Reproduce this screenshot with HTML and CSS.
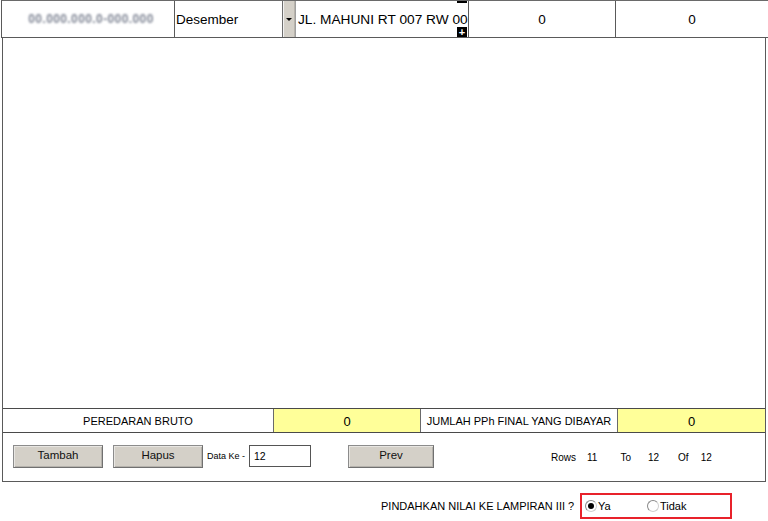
FILE: index.html
```html
<!DOCTYPE html>
<html>
<head>
<meta charset="utf-8">
<link rel="stylesheet" href="styles.css">
</head>
<body>
<div class="top-row">
  <div class="cell npwp"><span class="blur">00.000.000.0-000.000</span></div>
  <div class="cell bulan"><span>Desember</span></div>
  <div class="dd-btn"><span class="tri"></span></div>
  <div class="cell alamat"><span class="addr">JL. MAHUNI RT 007 RW 00</span><span class="plus">+</span><span class="plus-top"></span></div>
  <div class="cell num">0</div>
  <div class="cell num last">0</div>
</div>
<div class="panel">
  <div class="blank"></div>
  <div class="sum-row">
    <div class="sum-label l1">PEREDARAN BRUTO</div>
    <div class="sum-val v1">0</div>
    <div class="sum-label l2">JUMLAH PPh FINAL YANG DIBAYAR</div>
    <div class="sum-val v2">0</div>
  </div>
  <div class="btn-row">
    <button class="btn b-tambah">Tambah</button>
    <button class="btn b-hapus">Hapus</button>
    <span class="data-ke">Data Ke -</span>
    <div class="inp">12</div>
    <button class="btn b-prev">Prev</button>
    <div class="rows">
      <span class="r-rows">Rows</span><span class="r-n1">11</span>
      <span class="r-to">To</span><span class="r-n2">12</span>
      <span class="r-of">Of</span><span class="r-n3">12</span>
    </div>
  </div>
</div>
<div class="footer">
  <span class="question">PINDAHKAN NILAI KE LAMPIRAN III ?</span>
  <div class="radio-box">
    <span class="radio checked"></span><span class="r-label ya">Ya</span>
    <span class="radio"></span><span class="r-label">Tidak</span>
  </div>
</div>
</body>
</html>
```
FILE: styles.css
```css
* { box-sizing: border-box; }
html, body { margin: 0; padding: 0; background: #ffffff; }
body {
  width: 768px;
  height: 521px;
  overflow: hidden;
  font-family: "Liberation Sans", Arial, sans-serif;
  color: #000;
}

/* Top data row */
.top-row {
  display: flex;
  height: 38px;
  margin-left: 1px;
  border-top: 1px solid #6a6a6a;
  border-bottom: 1px solid #5a5a5a;
  border-left: 1px solid #5a5a5a;
}
.cell {
  display: flex;
  align-items: center;
  font-size: 13.5px;
  overflow: hidden;
  white-space: nowrap;
}
.npwp {
  width: 173px;
  justify-content: center;
  border-right: 1px solid #5a5a5a;
}
.blur {
  font-size: 12px;
  font-weight: bold;
  color: #7f8594;
  filter: blur(1.2px);
  letter-spacing: 0.4px;
  padding-left: 6px;
}
.bulan {
  width: 107px;
  padding-left: 1px;
}
.dd-btn {
  width: 14px;
  background: #d4d0c8;
  border-left: 1px solid #6d6d6d;
  border-right: 1px solid #a0a0a0;
  box-shadow: inset 1px 0 0 #f2f2f2, inset -1px 0 0 #b8b4ac;
  display: flex;
  align-items: center;
  justify-content: center;
}
.tri {
  width: 0;
  height: 0;
  border-left: 3px solid transparent;
  border-right: 3px solid transparent;
  border-top: 3px solid #000;
}
.alamat {
  position: relative;
  width: 173px;
  padding-left: 2px;
  border-right: 1px solid #5a5a5a;
  font-size: 13.7px;
}
.addr { display: block; }
.plus {
  position: absolute;
  right: 1px;
  bottom: 0;
  width: 10px;
  height: 10px;
  background: #000;
  color: #fff;
  font-size: 11px;
  line-height: 10px;
  text-align: center;
  font-weight: bold;
}
.plus-top {
  position: absolute;
  right: 1px;
  top: 0;
  width: 10px;
  height: 2px;
  background: #000;
}
.num {
  width: 147px;
  justify-content: center;
  border-right: 1px solid #5a5a5a;
  font-size: 13.5px;
}
.num.last {
  flex: 1;
  border-right: none;
}

/* Panel */
.panel {
  margin-left: 2px;
  width: 764px;
  height: 444px;
  border-left: 1px solid #5a5a5a;
  border-right: 1px solid #5a5a5a;
  border-bottom: 1px solid #5a5a5a;
  display: flex;
  flex-direction: column;
}
.blank { height: 370px; }
.sum-row {
  display: flex;
  height: 25px;
  border-top: 1px solid #4a4a4a;
  border-bottom: 1px solid #4a4a4a;
  font-size: 11px;
}
.sum-label {
  display: flex;
  align-items: center;
  justify-content: center;
}
.l1 { width: 270px; }
.l2 { width: 196px; }
.sum-val {
  display: flex;
  align-items: center;
  justify-content: center;
  background: #ffff99;
  font-size: 13px;
  padding-top: 2px;
}
.v1 {
  width: 148px;
  border-left: 1px solid #6a6a6a;
  border-right: 1px solid #6a6a6a;
}
.v2 {
  flex: 1;
  border-left: 1px solid #6a6a6a;
}

.btn-row {
  display: flex;
  align-items: flex-start;
  height: 48px;
  padding-top: 12px;
  padding-left: 10px;
}
.btn {
  height: 23px;
  background: #d4d0c8;
  border: 1px solid #8c8c8c;
  border-right-color: #707070;
  border-bottom-color: #707070;
  box-shadow: inset 1px 1px 0 #e8e6e2, inset -1px -1px 0 #b5b2ac;
  font-family: "Liberation Sans", Arial, sans-serif;
  font-size: 11.5px;
  color: #111;
  padding: 0 0 3px 0;
  margin: 0;
}
.b-tambah { width: 90px; }
.b-hapus { width: 90px; margin-left: 10px; }
.data-ke {
  font-size: 9px;
  margin-left: 4px;
  line-height: 23px;
  width: 42px;
}
.inp {
  width: 62px;
  height: 22px;
  border: 1px solid #555;
  font-size: 10.5px;
  line-height: 20px;
  padding-left: 4px;
}
.b-prev { width: 86px; margin-left: 37px; }
.rows {
  margin-left: 117px;
  display: flex;
  font-size: 10px;
  line-height: 23px;
  padding-top: 1px;
}
.r-n1 { margin-left: 11px; }
.r-to { margin-left: 23px; }
.r-n2 { margin-left: 17px; }
.r-of { margin-left: 19px; }
.r-n3 { margin-left: 12px; }

/* Footer */
.footer {
  display: flex;
  align-items: center;
  padding-top: 11px;
  padding-left: 381px;
}
.question {
  font-size: 11px;
  width: 199px;
}
.radio-box {
  display: flex;
  align-items: center;
  width: 152px;
  height: 26px;
  border: 2px solid #e8222b;
  padding-left: 3px;
}
.radio {
  width: 12px;
  height: 12px;
  border-radius: 50%;
  border: 1px solid #8a8a8a;
  border-right-color: #d0d0d0;
  border-bottom-color: #d0d0d0;
  background: #fff;
  position: relative;
}
.radio.checked::after {
  content: "";
  position: absolute;
  left: 2px;
  top: 2px;
  width: 6px;
  height: 6px;
  border-radius: 50%;
  background: #000;
}
.r-label {
  font-size: 11px;
  margin-left: 1px;
}
.r-label.ya {
  width: 49px;
}
```
